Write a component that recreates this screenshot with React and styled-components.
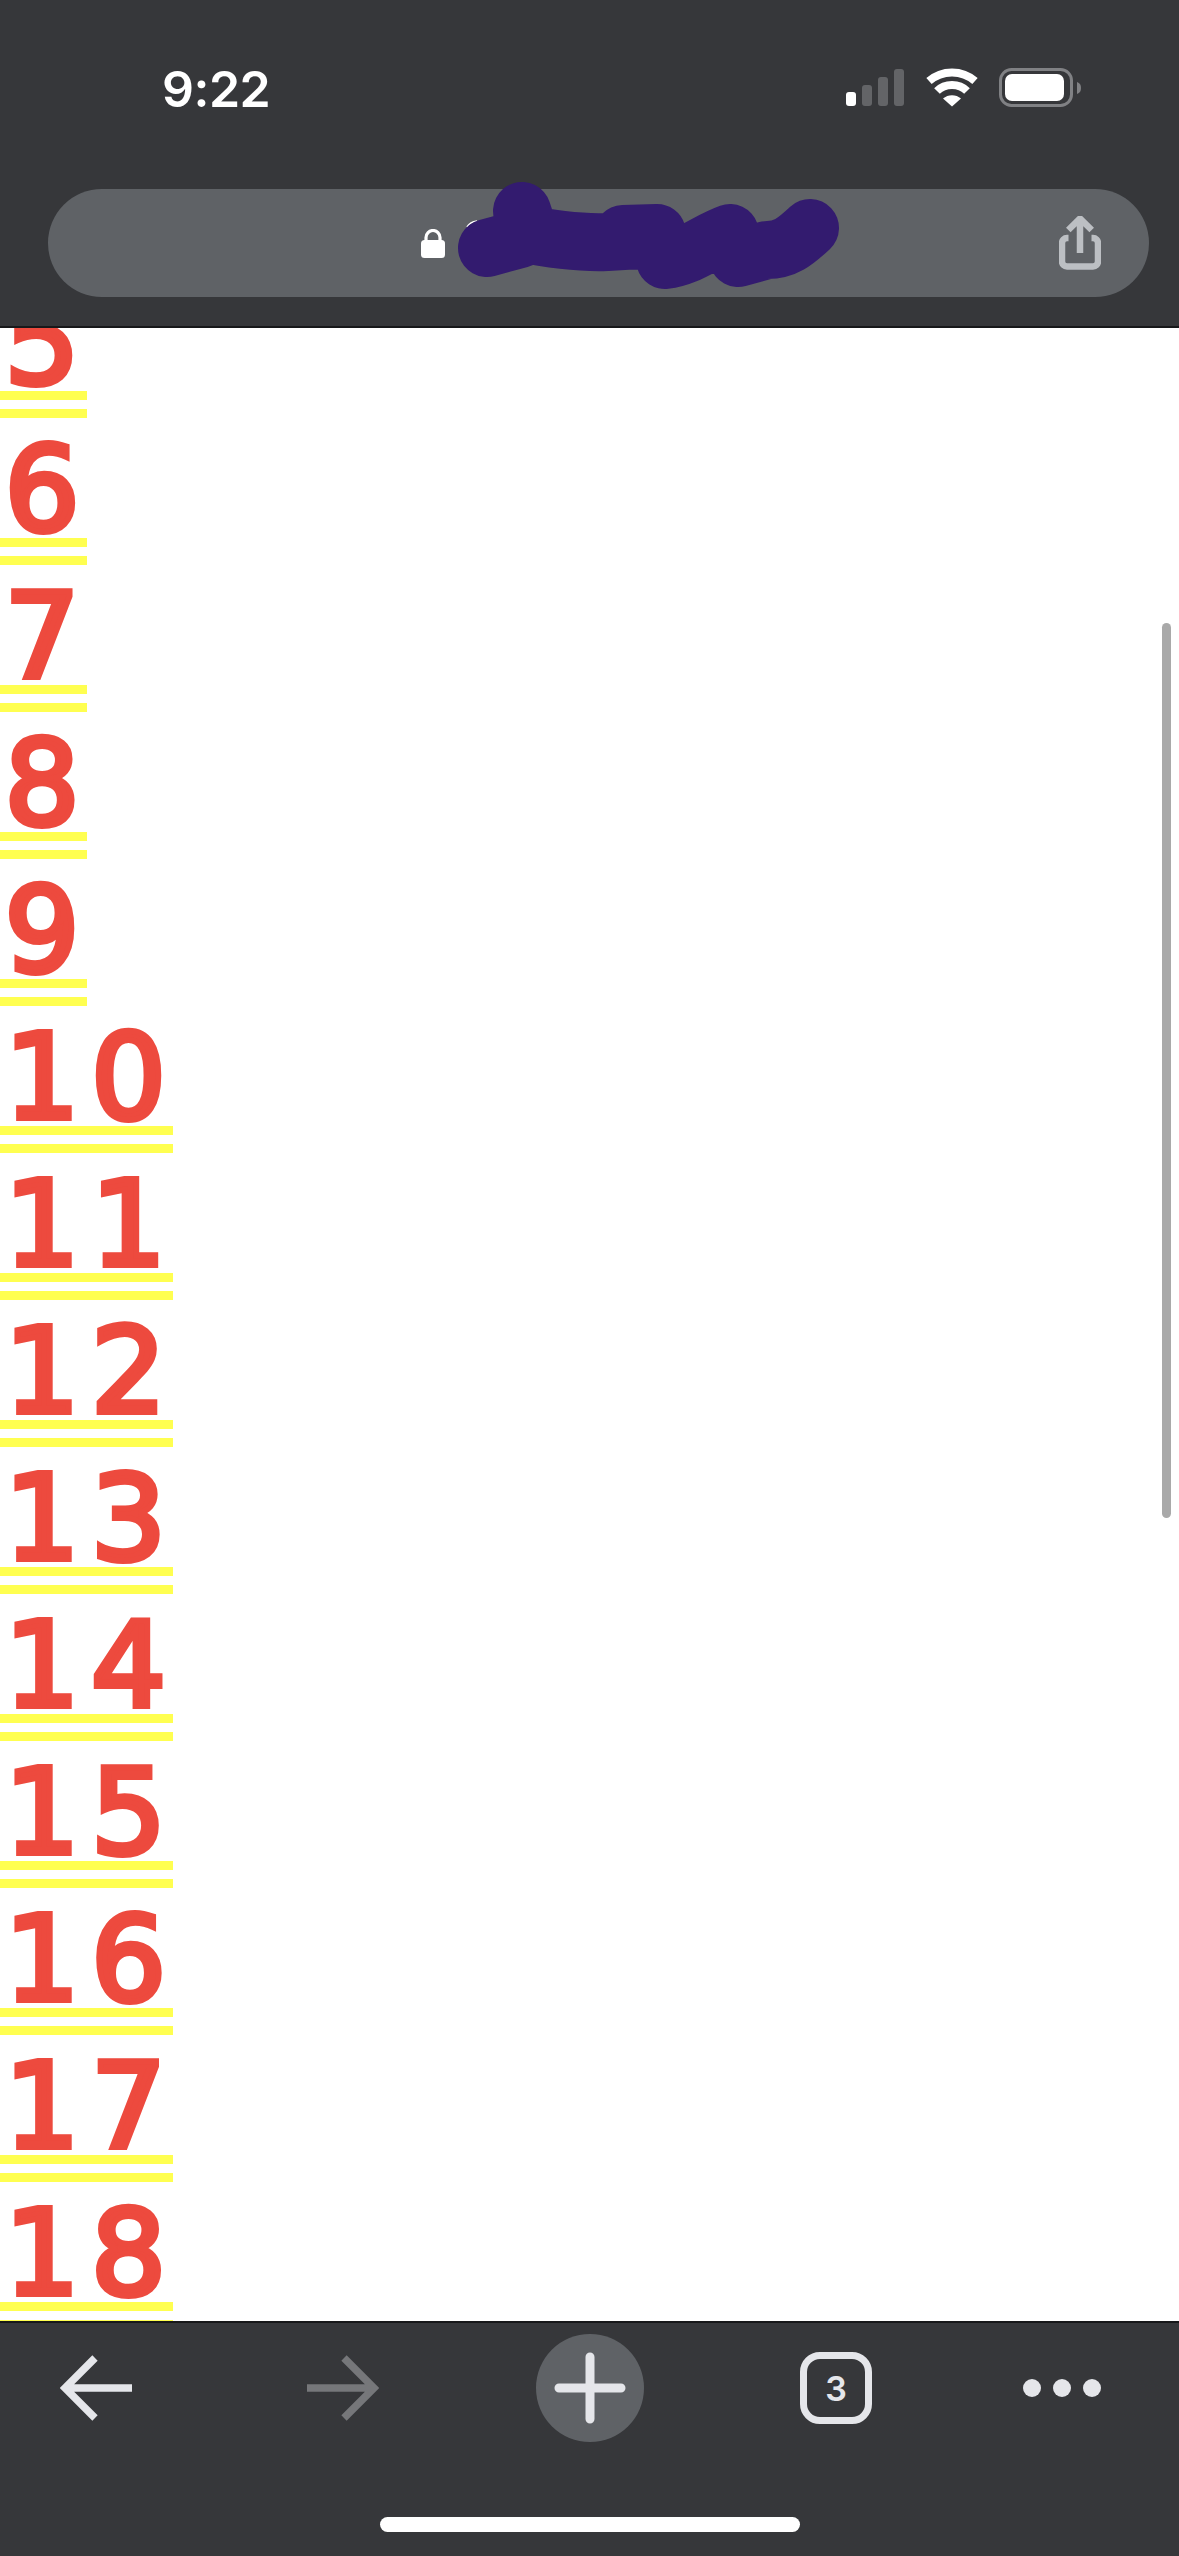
import React from "react";
import styled, { createGlobalStyle } from "styled-components";

const Global = createGlobalStyle`
  html, body { margin: 0; padding: 0; background: #fff; overflow: hidden; }
`;

const Screen = styled.div`
  width: 1179px;
  height: 2556px;
  display: flex;
  flex-direction: column;
  overflow: hidden;
  position: relative;
  background: #fff;
`;

const TopBar = styled.header`
  height: 328px;
  box-sizing: border-box;
  flex: none;
  background: #36373a;
  border-bottom: 2px solid #17181a;
  display: flex;
  flex-direction: column;
`;

const StatusRow = styled.div`
  height: 189px;
  flex: none;
  box-sizing: border-box;
  padding: 56px 0 0 162px;
  display: flex;
  align-items: flex-start;
`;

const Clock = styled.span`
  font-family: Inter, "Liberation Sans", sans-serif;
  font-weight: 600;
  font-size: 50px;
  letter-spacing: -0.5px;
  line-height: 66px;
  color: #fff;
  width: 684px;
`;

const StatusIcons = styled.svg`
  display: block;
  width: 240px;
  height: 60px;
  margin-top: 12px;
`;

const AddressBar = styled.div`
  position: relative;
  margin: 0 30px 0 48px;
  height: 108px;
  border-radius: 54px;
  background: #5f6266;
  display: flex;
  align-items: center;
  padding: 0 48px 0 373px;
  justify-content: space-between;
`;

const Scribble = styled.svg`
  position: absolute;
  left: 392px;
  top: -22px;
  width: 400px;
  height: 150px;
  overflow: visible;
`;

const Scroller = styled.main`
  flex: 1;
  min-height: 0;
  overflow: hidden;
  position: relative;
  background: #fff;
`;

const NumberList = styled.div`
  margin-top: -57px;
  display: flex;
  flex-direction: column;
  align-items: flex-start;
`;

const NumberRow = styled.div`
  box-sizing: border-box;
  width: ${(p) => p.$digits * 86.6}px;
  height: 147px;
  padding-top: 11px;
  font-family: "DejaVu Sans", sans-serif;
  font-weight: 400;
  font-size: 118px;
  line-height: 120px;
  letter-spacing: 11.5px;
  text-indent: 4.5px;
  color: #ed4a3e;
  -webkit-text-stroke: 6px #ed4a3e;
  border-bottom: 27px double #ffff50;
  white-space: nowrap;
`;

const ScrollThumb = styled.div`
  position: absolute;
  right: 8px;
  top: 295px;
  width: 9px;
  height: 895px;
  border-radius: 5px;
  background: #a9a9a9;
`;

const BottomBar = styled.footer`
  flex: none;
  height: 235px;
  box-sizing: border-box;
  background: #36373a;
  border-top: 2px solid #17181a;
  display: flex;
  flex-direction: column;
  align-items: center;
`;

const ToolRow = styled.nav`
  align-self: stretch;
  height: 108px;
  margin-top: 11px;
  padding-left: 60px;
  display: flex;
  align-items: center;
`;

const Tool = styled.svg`
  display: block;
  flex: none;
  margin-left: ${(p) => p.$gap || 0}px;
`;

const NewTab = styled.div`
  flex: none;
  width: 108px;
  height: 108px;
  border-radius: 50%;
  background: #5f6266;
  margin-left: 157px;
  display: flex;
  align-items: center;
  justify-content: center;
`;

const TabCount = styled.div`
  flex: none;
  width: 72px;
  height: 72px;
  box-sizing: border-box;
  margin-left: 156px;
  border: 7px solid #e5e6ea;
  border-radius: 20px;
  display: flex;
  align-items: center;
  justify-content: center;
  font-family: Inter, "Liberation Sans", sans-serif;
  font-weight: 600;
  font-size: 34px;
  color: #e5e6ea;
`;

const HomeIndicator = styled.div`
  width: 420px;
  height: 15px;
  margin-top: 75px;
  border-radius: 8px;
  background: #fff;
`;

const numbers = [5, 6, 7, 8, 9, 10, 11, 12, 13, 14, 15, 16, 17, 18];

export default function App() {
  return (
    <Screen>
      <Global />
      <TopBar>
        <StatusRow>
          <Clock>9:22</Clock>
          <StatusIcons viewBox="0 0 240 60">
            <rect x="0" y="24" width="10" height="14" rx="3" fill="#fff" />
            <rect x="16" y="17" width="10" height="21" rx="3" fill="#636467" />
            <rect x="32" y="9" width="10" height="29" rx="3" fill="#636467" />
            <rect x="48" y="1" width="10" height="37" rx="3" fill="#636467" />
            <g fill="none" stroke="#fff" strokeWidth="8">
              <path d="M83 13 C96 1.5 116 1.5 129 13" />
              <path d="M91 23 C99 15 113 15 121 23" />
            </g>
            <path d="M97 30.5 C102 26 110 26 115 30.5 L106 38.5 Z" fill="#fff" />
            <rect x="154.5" y="1.5" width="71" height="36" rx="11" fill="none" stroke="#808184" strokeWidth="3" />
            <rect x="159" y="6" width="59" height="27" rx="7" fill="#fff" />
            <path d="M231 14 C234 15 235 17 235 20 C235 23 234 25 231 26 Z" fill="#808184" />
          </StatusIcons>
        </StatusRow>
        <AddressBar>
          <svg width="24" height="29" viewBox="0 0 24 29">
            <path d="M5 13 V8.5 a7 7 0 0 1 14 0 V13" fill="none" stroke="#fff" strokeWidth="3.2" />
            <rect x="0" y="11" width="24" height="18" rx="3.5" fill="#fff" />
          </svg>
          <svg width="42" height="54" viewBox="0 0 42 54" fill="none" stroke="#bcbfc3" strokeWidth="6.5">
            <path d="M21 37 V4 M9.3 14 L21 2.5 L32.7 14" />
            <path d="M9.5 22 H8 a5 5 0 0 0 -5 5 V45.5 a5 5 0 0 0 5 5 H34 a5 5 0 0 0 5 -5 V27 a5 5 0 0 0 -5 -5 H32.5" />
          </svg>
          <Scribble viewBox="0 0 400 150">
            <path d="M27 60 Q30 55 37 54" fill="none" stroke="#fff" strokeWidth="1.5" />
            <path
              d="M47 81 L80 72 M88 62 L82 44 M80 66 C110 72 140 76 167 75 L200 73 M183 67 L217 66 L225 93 C250 90 265 75 290 66 L298 91 L327 83 C345 83 355 75 370 61"
              fill="none"
              stroke="#331b6f"
              strokeWidth="58"
              strokeLinecap="round"
              strokeLinejoin="round"
            />
          </Scribble>
        </AddressBar>
      </TopBar>
      <Scroller>
        <NumberList>
          {numbers.map((n) => (
            <NumberRow key={n} $digits={String(n).length}>{n}</NumberRow>
          ))}
        </NumberList>
        <ScrollThumb />
      </Scroller>
      <BottomBar>
        <ToolRow>
          <Tool width="72" height="66" viewBox="0 0 72 66" fill="none" stroke="#e5e6ea" strokeWidth="7.5">
            <path d="M72 33 H5 M35 3 L5 33 L35 63" />
          </Tool>
          <Tool $gap={175} width="72" height="66" viewBox="0 0 72 66" fill="none" stroke="#76777a" strokeWidth="7.5">
            <path d="M0 33 H67 M37 3 L67 33 L37 63" />
          </Tool>
          <NewTab>
            <svg width="72" height="72" viewBox="0 0 72 72" fill="none" stroke="#e5e6ea" strokeWidth="9" strokeLinecap="round">
              <path d="M36 5 V67 M5 36 H67" />
            </svg>
          </NewTab>
          <TabCount>3</TabCount>
          <Tool $gap={151} width="79" height="18" viewBox="0 0 79 18" fill="#e5e6ea">
            <circle cx="9" cy="9" r="9" />
            <circle cx="39" cy="9" r="9" />
            <circle cx="69" cy="9" r="9" />
          </Tool>
        </ToolRow>
        <HomeIndicator />
      </BottomBar>
    </Screen>
  );
}
